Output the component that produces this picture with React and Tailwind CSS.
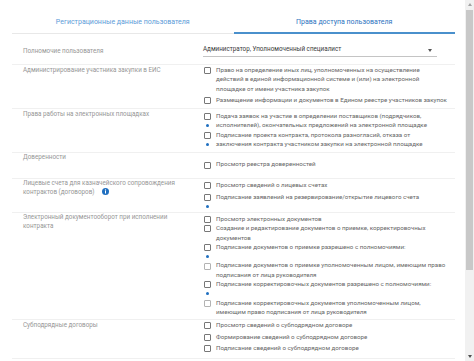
import React from "react";

const rows = [
  {
    label: ["Администрирование участника закупки в ЕИС"],
    lp: "pt-[0.5px]",
    ip: "pt-0",
    pb: "pb-[1.8px]",
    items: [
      {
        lines: [
          "Право на определение иных лиц, уполномоченных на осуществление",
          "действий в единой информационной системе и (или) на электронной",
          "площадке от имени участника закупок",
        ],
      },
      { lines: ["Размещение информации и документов в Едином реестре участников закупок"] },
    ],
  },
  {
    label: ["Права работы на электронных площадках"],
    lp: "pt-[1px]",
    ip: "pt-[3px]",
    pb: "pb-[2.8px]",
    tight: true,
    items: [
      {
        lines: [
          "Подача заявок на участие в определении поставщиков (подрядчиков,",
          "исполнителей), окончательных предложений на электронной площадке",
        ],
        dot: true,
      },
      {
        lines: [
          "Подписание проекта контракта, протокола разногласий, отказа от",
          "заключения контракта участником закупки на электронной площадке",
        ],
        dot: true,
      },
    ],
  },
  {
    label: ["Доверенности"],
    lp: "pt-0",
    ip: "pt-[6.4px]",
    pb: "pb-[7.3px]",
    items: [{ lines: ["Просмотр реестра доверенностей"] }],
  },
  {
    label: ["Лицевые счета для казначейского сопровождения", "контрактов (договоров)"],
    info: true,
    lp: "pt-0",
    ip: "pt-[1.4px]",
    pb: "pb-[2px]",
    items: [
      { lines: ["Просмотр сведений о лицевых счетах"] },
      { lines: ["Подписание заявлений на резервирование/открытие лицевого счета"] },
      { marker: true },
    ],
  },
  {
    label: ["Электронный документооборот при исполнении", "контракта"],
    lp: "pt-0",
    ip: "pt-[2px]",
    pb: "pb-[1.7px]",
    tight: true,
    items: [
      { lines: ["Просмотр электронных документов"] },
      {
        lines: [
          "Создание и редактирование документов о приемке, корректировочных",
          "документов",
        ],
      },
      { lines: ["Подписание документов о приемке разрешено с полномочиями:"] },
      { marker: true },
      {
        lines: [
          "Подписание документов о приемке уполномоченным лицом, имеющим право",
          "подписания от лица руководителя",
        ],
        faded: true,
      },
      { lines: ["Подписание корректировочных документов разрешено с полномочиями:"] },
      { marker: true },
      {
        lines: [
          "Подписание корректировочных документов уполномоченным лицом,",
          "имеющим право подписания от лица руководителя",
        ],
        faded: true,
      },
    ],
  },
  {
    label: ["Субподрядные договоры"],
    lp: "pt-[1px]",
    ip: "pt-[0.4px]",
    pb: "pb-[3.7px]",
    items: [
      { lines: ["Просмотр сведений о субподрядном договоре"] },
      { lines: ["Формирование сведений о субподрядном договоре"] },
      { lines: ["Подписание сведений о субподрядном договоре"] },
    ],
  },
];

const Check = ({ faded }) => (
  <span
    className={`block h-[7px] w-[7px] rounded-[1px] border bg-white ${
      faded ? "border-[#b3b3b3]" : "border-[#777]"
    }`}
  />
);

const Dot = () => <span className="block h-[3px] w-[3px] rounded-full bg-[#1f6fc0]" />;

const Info = () => (
  <svg width="7" height="7" viewBox="0 0 14 14" className="ml-[8px] inline-block align-[-1px]">
    <circle cx="7" cy="7" r="7" fill="#1f6fc0" />
    <circle cx="7" cy="4" r="1.3" fill="#fff" />
    <rect x="6" y="6" width="2" height="5" fill="#fff" />
  </svg>
);

function Item({ item, tight }) {
  if (item.marker) {
    return (
      <div className={`flex items-center pl-[2px] ${tight ? "h-[9.3px]" : "h-[7px]"}`}>
        <Dot />
      </div>
    );
  }
  return (
    <div className={`flex ${tight ? "" : "py-[1px]"}`}>
      <div className="flex w-[12px] shrink-0 flex-col">
        <div className="flex h-[9.3px] items-center">
          <Check faded={item.faded} />
        </div>
        {item.dot && (
          <div className="flex h-[9.3px] items-center pl-[2px]">
            <Dot />
          </div>
        )}
      </div>
      <div>
        {item.lines.map((l) => (
          <div key={l} className="whitespace-nowrap">
            {l}
          </div>
        ))}
      </div>
    </div>
  );
}

export default function App() {
  return (
    <div
      className="flex h-[361px] w-[474px] overflow-hidden bg-white"
      style={{ fontFamily: "Roboto, 'Liberation Sans', sans-serif" }}
    >
      <div className="w-[465px] shrink-0 pl-[12px] pr-[10px] pt-[12px]">
        {/* tabs */}
        <div className="flex">
          <div className="flex h-[22px] flex-1 items-center justify-center border-b border-[#e8e8e8] text-[7px] text-[#5b9bd8]">
            Регистрационные данные пользователя
          </div>
          <div className="flex h-[22px] flex-1 items-center justify-center border-b-2 border-[#4a90cc] text-[7px] text-[#2b73c0]">
            Права доступа пользователя
          </div>
        </div>

        {/* role select */}
        <div className="flex h-[31px] border-b border-[#f0f0f0]">
          <div className="w-[191px] shrink-0 pl-[11px] pt-[13px] text-[6.3px] leading-[9.5px] text-[#969696]">
            Полномочие пользователя
          </div>
          <div className="pt-[11.4px]">
            <div className="flex w-[234px] items-center justify-between border-b border-[#c4c4c4] pb-[1px] text-[6.3px] leading-[9.3px] text-[#3a3a3a]">
              <span>Администратор, Уполномоченный специалист</span>
              <span className="mr-[5px] h-0 w-0 border-x-[2.5px] border-t-[3px] border-x-transparent border-t-[#555]" />
            </div>
          </div>
        </div>

        {rows.map((r) => (
          <div key={r.label[0]} className={`flex border-b border-[#f0f0f0] ${r.pb}`}>
            <div className={`w-[191px] shrink-0 pl-[11px] text-[6.3px] leading-[9.5px] text-[#969696] ${r.lp}`}>
              {r.label.map((l, i) => (
                <div key={l} className="whitespace-nowrap">
                  {l}
                  {r.info && i === r.label.length - 1 && <Info />}
                </div>
              ))}
            </div>
            <div className={`pl-[1px] text-[6.2px] leading-[9.3px] text-[#666] ${r.ip}`}>
              {r.items.map((it, i) => (
                <Item key={i} item={it} tight={r.tight} />
              ))}
            </div>
          </div>
        ))}
      </div>

      {/* scrollbar */}
      <div className="flex w-[9px] flex-col items-center bg-[#f1f1f1]">
        <span className="mt-[3px] h-0 w-0 border-x-[2px] border-b-[3px] border-x-transparent border-b-[#a3a3a3]" />
        <div className="mt-[4px] h-[260px] w-[7px] bg-[#c8c8c8]" />
        <div className="flex-1" />
        <span className="mb-[3px] h-0 w-0 border-x-[2px] border-t-[3px] border-x-transparent border-t-[#505050]" />
      </div>
    </div>
  );
}
